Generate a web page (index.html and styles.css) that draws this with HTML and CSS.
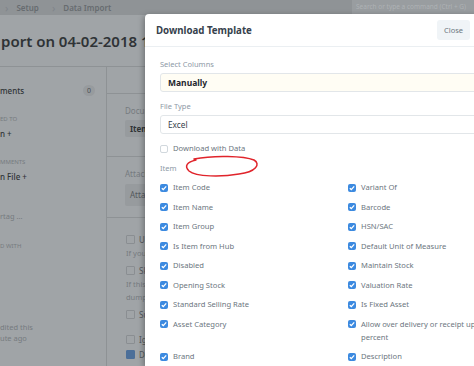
FILE: index.html
```html
<!DOCTYPE html>
<html lang="en">

<head>
    <meta charset="UTF-8">
    <meta name="viewport" content="width=device-width, initial-scale=1.0">
    <title>Data Import</title>
    <link rel="stylesheet" href="styles.css">
</head>

<body>
    <!-- page behind the dialog, already dimmed by the backdrop -->
    <div class="page">
        <div class="navbar">
            <div class="breadcrumb">
                <span class="crumb-sep">&#8250;</span>
                <span class="crumb">Setup</span>
                <span class="crumb-sep">&#8250;</span>
                <span class="crumb">Data Import</span>
            </div>
            <div class="search">Search or type a command (Ctrl + G)</div>
        </div>

        <div class="page-head">
            <h1>port on 04-02-2018 1</h1>
        </div>

        <div class="page-body">
            <aside class="sidebar">
                <div class="side-row">
                    <span class="side-link">ments</span>
                    <span class="badge">0</span>
                </div>
                <div class="side-label">ED TO</div>
                <div class="side-link">n +</div>
                <div class="side-label side-gap">MMENTS</div>
                <div class="side-link">n File +</div>
                <div class="side-muted side-tag">rtag ...</div>
                <div class="side-label side-shared">D WITH</div>
                <div class="side-muted side-edit">dited this</div>
                <div class="side-muted">ute ago</div>
            </aside>

            <main class="form">
                <div class="form-section form-top"></div>
                <div class="form-section">
                    <div class="control-label">Document Type</div>
                    <div class="control-input">Item</div>
                </div>
                <div class="form-section form-attach">
                    <div class="control-label">Attach</div>
                    <div class="control-button">Attach</div>
                </div>
                <div class="form-section form-checks">
                    <div class="check-row"><span class="box"></span>Update records</div>
                    <div class="check-help">If you don't want to create any new records</div>
                    <div class="check-row"><span class="box"></span>Skip rows with errors</div>
                    <div class="check-help">If this is checked, rows with valid data will be imported<br>dumped into a new file for you to import later</div>
                    <div class="check-row"><span class="box"></span>Submit after import</div>
                    <div class="check-row check-space"><span class="box"></span>Ignore encoding errors</div>
                    <div class="check-row"><span class="box box-on"></span>Don't send emails</div>
                </div>
            </main>
        </div>
    </div>

    <div class="modal">
        <div class="modal-header">
            <h4 class="modal-title">Download Template</h4>
            <div class="modal-actions">
                <button class="btn btn-default">Close</button>
                <button class="btn btn-primary">Download</button>
            </div>
        </div>
        <div class="modal-body">
            <div class="field">
                <label class="field-label">Select Columns</label>
                <div class="select select-highlight">Manually</div>
            </div>
            <div class="field">
                <label class="field-label">File Type</label>
                <div class="select">Excel</div>
            </div>
            <label class="check">
                <span class="tick"></span>Download with Data
            </label>
            <div class="field-label section-label">Item</div>
            <div class="columns" id="columns"></div>
        </div>
    </div>

    <!-- red marker someone drew on the screenshot -->
    <svg class="scribble" width="76" height="24" viewBox="0 0 76 24">
        <path d="M10 4 C 30 0, 60 1, 70 5 C 77 9, 72 17, 55 19 C 38 22, 12 22, 5 16 C 0 11, 3 7, 12 5"
            fill="none" stroke="#e0242b" stroke-width="1.5" stroke-linecap="round" />
    </svg>

    <script>
        const fields = [
            'Item Code', 'Variant Of',
            'Item Name', 'Barcode',
            'Item Group', 'HSN/SAC',
            'Is Item from Hub', 'Default Unit of Measure',
            'Disabled', 'Maintain Stock',
            'Opening Stock', 'Valuation Rate',
            'Standard Selling Rate', 'Is Fixed Asset',
            'Asset Category', 'Allow over delivery or receipt upto this percent',
            'Brand', 'Description'
        ];

        const columns = document.getElementById('columns');
        fields.forEach(name => {
            const row = document.createElement('label');
            row.className = 'check';
            row.innerHTML = `<span class="tick tick-on"></span><span>${name}</span>`;
            columns.appendChild(row);
        });
    </script>
</body>

</html>
```

FILE: styles.css
```css
:root {
    --dim-bg: #a0a4a7;
    --dim-nav: #8f9396;
    --dim-line: #8e9295;
    --dim-input: #979b9e;
    --dim-dark: #2f3336;
    --dim-text: #55595d;
    --dim-light: #767b7f;
    --text-color: #36414c;
    --text-muted: #6c7680;
    --label-color: #8d99a6;
    --check-blue: #3c8ae0;
}

html,
body {
    margin: 0;
    padding: 0;
    height: 100%;
    overflow: hidden;
}

body {
    font-family: 'Noto Sans', 'Open Sans', sans-serif;
    background: var(--dim-bg);
    color: var(--text-color);
    position: relative;
}

/* ---------- background page ---------- */

.page {
    width: 474px;
    height: 366px;
    background: var(--dim-bg);
}

.navbar {
    height: 15px;
    background: var(--dim-nav);
    display: flex;
    align-items: center;
}

.breadcrumb {
    display: flex;
    align-items: center;
    gap: 8px;
    padding-left: 5px;
    font-size: 8px;
    font-weight: 600;
    color: #676c70;
}

.crumb-sep {
    font-size: 11px;
    font-weight: 400;
    color: #80858a;
    line-height: 1;
}

.crumb+.crumb-sep {
    margin-left: 5px;
}

.search {
    margin-left: auto;
    width: 118px;
    height: 14px;
    padding-left: 4px;
    align-self: flex-start;
    background: #999da0;
    color: #aeb2b5;
    font-size: 6.5px;
    line-height: 14px;
    white-space: nowrap;
    overflow: hidden;
}

.page-head {
    height: 51px;
    border-bottom: 1px solid var(--dim-line);
    display: flex;
    align-items: center;
}

.page-head h1 {
    margin: 0 0 0 1px;
    font-size: 15px;
    font-weight: 600;
    color: var(--dim-dark);
    white-space: nowrap;
}

/* only the strip left of the dialog is ever seen */
.page-body {
    display: flex;
    width: 145px;
    height: 300px;
    overflow: hidden;
}

.sidebar {
    flex: none;
    width: 106px;
    border-right: 1px solid var(--dim-line);
    font-size: 8px;
    padding-top: 17px;
}

.side-row {
    display: flex;
    align-items: center;
    justify-content: space-between;
    padding-right: 11px;
    height: 13px;
}

.side-link {
    color: var(--dim-dark);
    font-weight: 500;
    line-height: 13px;
}

.badge {
    background: #979b9e;
    color: #4a4e52;
    font-size: 7px;
    padding: 1px 4px;
    border-radius: 6px;
}

.side-label {
    font-size: 6px;
    color: var(--dim-light);
    line-height: 10px;
    margin-top: 17px;
    margin-bottom: 3px;
}

.side-gap {
    margin-top: 17px;
}

.side-muted {
    color: var(--dim-light);
    font-size: 7.5px;
    line-height: 11px;
}

.side-tag {
    margin-top: 28px;
}

.side-shared {
    margin-top: 19px;
}

.side-edit {
    margin-top: 71px;
}

.form {
    flex: none;
    width: 300px;
    font-size: 8px;
    white-space: nowrap;
}

.form-section {
    border-bottom: 1px solid var(--dim-line);
    padding: 11px 0 19px 18px;
}

.form-top {
    height: 26px;
    padding: 0;
}

.form-attach {
    padding-bottom: 11px;
}

.control-label {
    color: var(--dim-light);
    line-height: 12px;
}

.control-input {
    margin-top: 3px;
    height: 17px;
    line-height: 17px;
    padding-left: 5px;
    background: var(--dim-input);
    color: var(--dim-dark);
    font-weight: 700;
    border-radius: 2px;
}

.control-button {
    margin-top: 4px;
    height: 22px;
    line-height: 22px;
    padding-left: 5px;
    width: 60px;
    background: var(--dim-input);
    color: var(--dim-text);
    border-radius: 2px;
}

.form-checks {
    border-bottom: none;
    padding: 14px 0 0 19px;
}

.check-row {
    display: flex;
    align-items: center;
    gap: 4px;
    color: var(--dim-text);
    line-height: 15px;
}

.check-space {
    margin-top: 10px;
}

.check-help {
    color: var(--dim-light);
    font-size: 7.5px;
    line-height: 13px;
    margin-bottom: 3px;
}

.box {
    width: 7px;
    height: 7px;
    border: 1px solid #8a8e92;
    border-radius: 1px;
}

.box-on {
    background: #4c6f99;
    border-color: #4c6f99;
}

/* ---------- dialog ---------- */

.modal {
    position: absolute;
    left: 145px;
    top: 14px;
    width: 406px;
    height: 352px;
    overflow: hidden;
    background: #fff;
    border-radius: 4px 4px 0 0;
    box-shadow: -1px 2px 6px rgba(0, 0, 0, 0.35);
}

.modal-header {
    height: 33px;
    box-sizing: border-box;
    border-bottom: 1px solid #ebeff2;
    display: flex;
    align-items: center;
    padding: 0 15px 0 11px;
}

.modal-title {
    margin: 0;
    font-size: 9.7px;
    font-weight: 700;
    color: var(--text-color);
}

.modal-actions {
    margin-left: auto;
    display: flex;
    gap: 5px;
}

.btn {
    font-family: inherit;
    font-size: 7.5px;
    height: 20px;
    padding: 0 7px;
    border: none;
    border-radius: 3px;
}

.btn-default {
    background: #f0f4f7;
    color: var(--text-muted);
}

.btn-primary {
    background: #5e64ff;
    color: #fff;
    width: 61px;
}

.modal-body {
    padding: 11px 15px 0;
    font-size: 7.6px;
}

.field {
    margin-bottom: 8px;
}

.field-label {
    display: block;
    color: var(--label-color);
    font-size: 7.5px;
    line-height: 12px;
    margin-bottom: 3px;
}

.select {
    height: 19px;
    box-sizing: border-box;
    border: 1px solid #e2e6e9;
    border-radius: 3px;
    padding-left: 7px;
    line-height: 17px;
    font-size: 8.3px;
    color: var(--text-color);
}

.select-highlight {
    background: #fffdf4;
    font-weight: 700;
    font-size: 8.5px;
    color: #1f272e;
}

.check {
    display: flex;
    align-items: flex-start;
    gap: 5px;
    color: var(--text-muted);
    line-height: 13px;
}

.modal-body>.check {
    margin-top: 7px;
}

.tick {
    flex: none;
    width: 8px;
    height: 8px;
    margin-top: 2.5px;
    box-sizing: border-box;
    border: 1px solid #d1d8dd;
    border-radius: 2px;
    background: #fff;
}

.tick-on {
    border: none;
    background: var(--check-blue) url("data:image/svg+xml,%3Csvg xmlns='http://www.w3.org/2000/svg' viewBox='0 0 8 8'%3E%3Cpath d='M1.8 4.2 3.3 5.6 6.2 2.4' fill='none' stroke='white' stroke-width='1.3'/%3E%3C/svg%3E") center / 8px 8px no-repeat;
}

.section-label {
    margin-top: 7px;
    margin-bottom: 7px;
}

.columns {
    display: grid;
    grid-template-columns: 188px 188px;
    row-gap: 6.5px;
}

.columns .check {
    padding-right: 10px;
}

.scribble {
    position: absolute;
    left: 184px;
    top: 155px;
}
```
